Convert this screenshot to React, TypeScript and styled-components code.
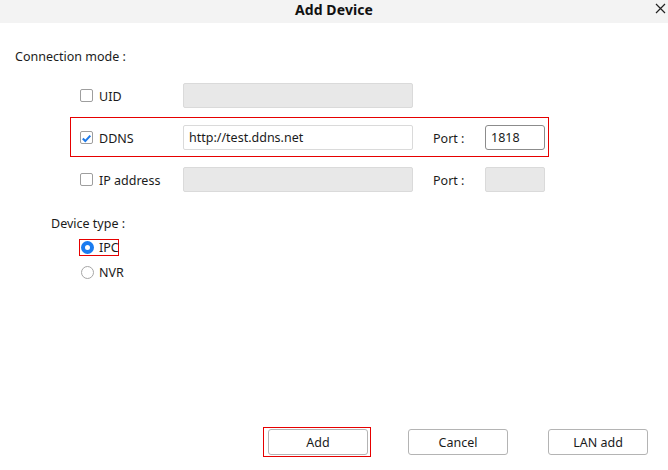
import { FC } from "react";
import styled, { createGlobalStyle } from "styled-components";

const GlobalStyle = createGlobalStyle`
  html, body {
    margin: 0;
    padding: 0;
    background: #ffffff;
  }
  body {
    font-family: "Noto Sans", "Open Sans", "Liberation Sans", sans-serif;
    color: #1b1b1b;
  }
`;

const Dialog = styled.div`
  width: 668px;
  height: 470px;
  display: flex;
  flex-direction: column;
  background: #ffffff;
  overflow: hidden;
`;

const TitleBar = styled.div`
  height: 23px;
  background: #f3f3f3;
  display: grid;
  grid-template-columns: 1fr auto 1fr;
  align-items: center;
  .title {
    font-size: 14px;
    font-weight: 700;
    color: #111;
    letter-spacing: 0.1px;
    margin-top: -5px;
  }
  .close {
    justify-self: end;
    margin-right: 2px;
    margin-top: -6px;
    display: flex;
  }
`;

const Body = styled.div`
  flex: 1;
  display: flex;
  flex-direction: column;
  padding-top: 26px;
`;

const SectionLabel = styled.div<{ $indent: number; $gap?: number }>`
  font-size: 12.5px;
  line-height: 16px;
  padding-left: ${(p) => p.$indent}px;
  margin-top: ${(p) => p.$gap ?? 0}px;
`;

const Rows = styled.div`
  display: flex;
  flex-direction: column;
  gap: 2px;
  margin-top: 10px;
  padding-left: 70px;
`;

const Row = styled.div<{ $marked?: boolean }>`
  width: 479px;
  height: 40px;
  box-sizing: border-box;
  border: 1px solid ${(p) => (p.$marked ? "#e60000" : "transparent")};
  display: flex;
  align-items: center;
  padding-left: 9px;
  .name {
    width: 103px;
    display: flex;
    align-items: center;
    gap: 6px;
    font-size: 12.5px;
  }
  .name span,
  .port {
    padding-top: 3px;
  }
  .port {
    width: 52px;
    margin-left: 20px;
    font-size: 12.5px;
  }
`;

const Box = styled.span`
  flex-shrink: 0;
  width: 13px;
  height: 13px;
  box-sizing: border-box;
  border: 1px solid #9e9e9e;
  border-radius: 2px;
  background: #fff;
  display: flex;
  align-items: center;
  justify-content: center;
`;

const Field = styled.div<{ $width: number; $disabled?: boolean; $strong?: boolean }>`
  width: ${(p) => p.$width}px;
  height: 25px;
  box-sizing: border-box;
  border: 1px solid ${(p) => (p.$strong ? "#8c8c8c" : "#dadada")};
  border-radius: ${(p) => (p.$strong ? 3 : 2)}px;
  background: ${(p) => (p.$disabled ? "#e8e8e8" : "#ffffff")};
  font-size: 12.5px;
  display: flex;
  align-items: center;
  padding-left: 5px;
  color: #1b1b1b;
`;

const Radios = styled.div`
  display: flex;
  flex-direction: column;
  align-items: flex-start;
  gap: 8px;
  margin-top: 7px;
  padding-left: 79px;
`;

const RadioItem = styled.div<{ $marked?: boolean }>`
  display: flex;
  align-items: center;
  gap: 5px;
  height: 17px;
  box-sizing: border-box;
  padding: 0 0 0 1px;
  width: 40px;
  border: 1px solid ${(p) => (p.$marked ? "#e60000" : "transparent")};
  font-size: 12.5px;
  white-space: nowrap;
`;

const Dot = styled.span<{ $on?: boolean }>`
  flex-shrink: 0;
  width: 13px;
  height: 13px;
  box-sizing: border-box;
  border-radius: 50%;
  border: ${(p) => (p.$on ? "4px solid #1a7cf0" : "1px solid #a6a6a6")};
  background: #fff;
`;

const Footer = styled.div`
  display: flex;
  justify-content: flex-end;
  align-items: center;
  gap: 40px;
  padding: 0 20px 13px 0;
  margin-top: auto;
`;

const Mark = styled.div<{ $marked?: boolean }>`
  border: 1px solid ${(p) => (p.$marked ? "#e60000" : "transparent")};
  padding: 1px 2px 1px 4px;
  margin: 0 -3px 0 -5px;
  display: flex;
`;

const Button = styled.div`
  width: 100px;
  height: 26px;
  box-sizing: border-box;
  border: 1px solid #b4b4b4;
  border-radius: 3px;
  background: #ffffff;
  font-size: 12.5px;
  display: flex;
  align-items: center;
  justify-content: center;
`;

type ModeRow = {
  name: string;
  checked?: boolean;
  value?: string;
  port?: string;
  showPort?: boolean;
};

const modes: ModeRow[] = [
  { name: "UID" },
  { name: "DDNS", checked: true, value: "http://test.ddns.net", port: "1818", showPort: true },
  { name: "IP address", showPort: true },
];

const Check: FC<{ checked?: boolean }> = ({ checked }) => (
  <Box>
    {checked && (
      <svg width="11" height="11" viewBox="0 0 11 11">
        <path d="M1.8 5.6 L4.3 8.1 L9.3 2.6" fill="none" stroke="#1f7ae8" strokeWidth="2.1" />
      </svg>
    )}
  </Box>
);

const App: FC = () => {
  return (
    <>
      <GlobalStyle />
      <Dialog>
        <TitleBar>
          <span />
          <span className="title">Add Device</span>
          <span className="close">
            <svg width="11" height="11" viewBox="0 0 11 11">
              <path d="M1 1 L10 10 M10 1 L1 10" stroke="#222" strokeWidth="1.2" />
            </svg>
          </span>
        </TitleBar>
        <Body>
          <SectionLabel $indent={15}>Connection mode :</SectionLabel>
          <Rows>
            {modes.map((m) => (
              <Row key={m.name} $marked={m.checked}>
                <div className="name">
                  <Check checked={m.checked} />
                  <span>{m.name}</span>
                </div>
                <Field $width={230} $disabled={!m.checked}>
                  {m.value}
                </Field>
                {m.showPort && (
                  <>
                    <span className="port">Port :</span>
                    <Field $width={60} $disabled={!m.checked} $strong={m.checked}>
                      {m.port}
                    </Field>
                  </>
                )}
              </Row>
            ))}
          </Rows>
          <SectionLabel $indent={51} $gap={17}>
            Device type :
          </SectionLabel>
          <Radios>
            <RadioItem $marked>
              <Dot $on />
              <span>IPC</span>
            </RadioItem>
            <RadioItem>
              <Dot />
              <span>NVR</span>
            </RadioItem>
          </Radios>
          <Footer>
            <Mark $marked>
              <Button>Add</Button>
            </Mark>
            <Button>Cancel</Button>
            <Button>LAN add</Button>
          </Footer>
        </Body>
      </Dialog>
    </>
  );
};

export default App;
